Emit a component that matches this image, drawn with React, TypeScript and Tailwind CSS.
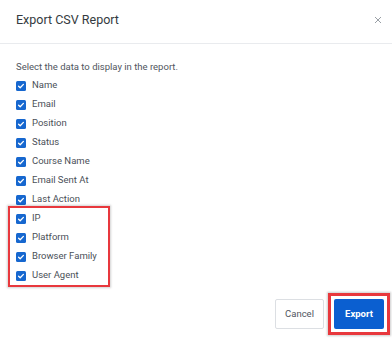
import React from 'react'

const topFields = ['Name', 'Email', 'Position', 'Status', 'Course Name', 'Email Sent At', 'Last Action']
const markedFields = ['IP', 'Platform', 'Browser Family', 'User Agent']

function CheckBox() {
  return (
    <span className="flex h-[10px] w-[10px] items-center justify-center rounded-[1.5px] bg-[#1667cf]">
      <svg width="8" height="8" viewBox="0 0 8 8" fill="none">
        <path d="M1.6 4.2 L3.2 5.7 L6.4 2.4" stroke="#fff" strokeWidth="1.3" strokeLinecap="round" strokeLinejoin="round" />
      </svg>
    </span>
  )
}

function FieldRow({ label }: { label: string }) {
  return (
    <label className="flex h-[19px] items-center gap-[6px] text-[9.5px] text-[#4a5058]">
      <CheckBox />
      <span>{label}</span>
    </label>
  )
}

export default function App() {
  return (
    <div className="h-[338px] w-[392px] bg-white font-['Roboto','Liberation_Sans',sans-serif]">
      <div className="flex h-[44px] items-start justify-between border-b border-[#e9ebee] pl-4 pr-[8px] pt-[12px]">
        <h1 className="text-[12.5px] leading-[16px] text-[#343a40]">Export CSV Report</h1>
        <button className="flex h-[16px] w-[12px] items-center justify-center">
          <svg width="8" height="8" viewBox="0 0 8 8">
            <path d="M1 1 L7 7 M7 1 L1 7" stroke="#9aa0a6" strokeWidth="1" />
          </svg>
        </button>
      </div>

      <div className="pl-4 pt-[16px]">
        <p className="text-[9.5px] leading-[14px] text-[#50565e]">Select the data to display in the report.</p>
        <div className="mt-[2px] flex flex-col">
          {topFields.map(f => (
            <FieldRow key={f} label={f} />
          ))}
          <div className="-ml-2 mt-[-3px] w-[102px] border-2 border-[#e8383d] pl-[6px] pt-[1px] shadow-[0_0_2px_1px_rgba(0,0,0,0.18)]">
            {markedFields.map(f => (
              <FieldRow key={f} label={f} />
            ))}
          </div>
        </div>
      </div>

      <div className="mt-[6px] flex items-center justify-end gap-[4px] pr-[2px]">
        <button className="h-[30px] w-[49px] rounded-[2px] border border-[#dcdfe3] bg-white text-[9.5px] text-[#50565e]">
          Cancel
        </button>
        <div className="border-[3px] border-[#e8383d] p-[3px] shadow-[0_0_2px_1px_rgba(0,0,0,0.2)]">
          <button className="h-[30px] w-[50px] rounded-[2px] bg-[#0b5fd0] text-[9.5px] font-bold text-white">
            Export
          </button>
        </div>
      </div>
    </div>
  )
}
